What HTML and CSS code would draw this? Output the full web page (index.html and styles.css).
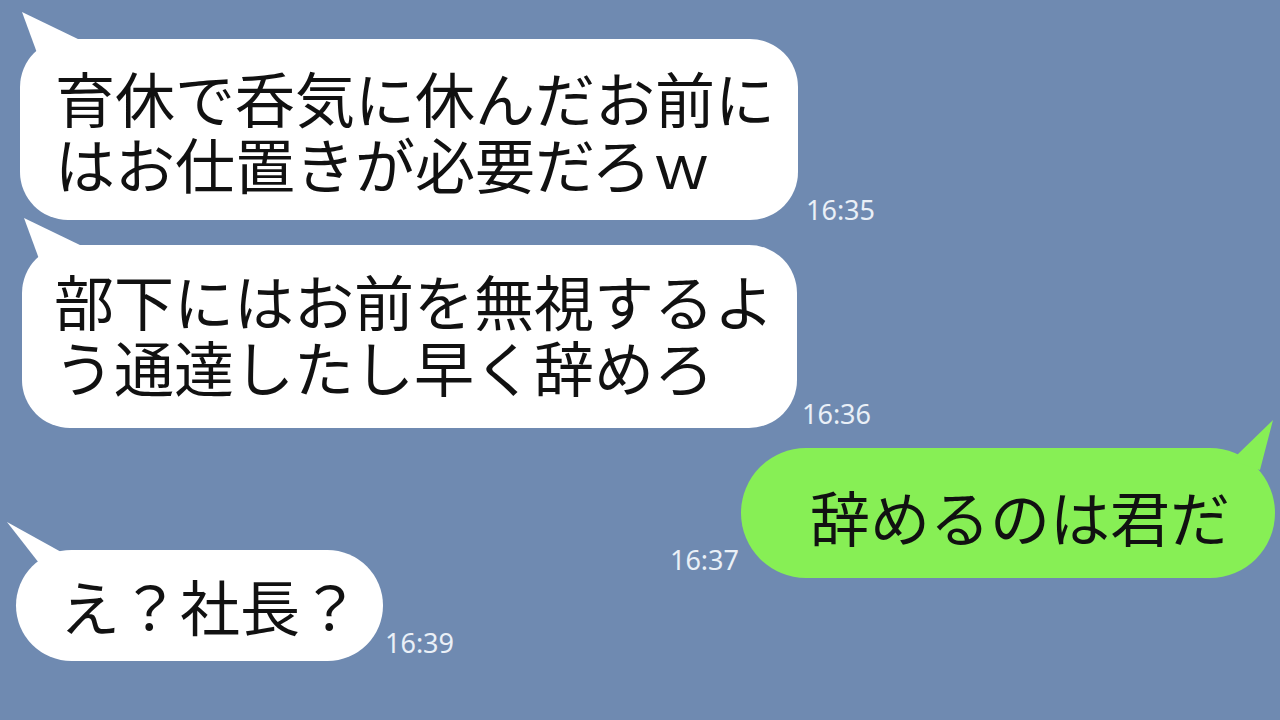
FILE: index.html
```html
<!DOCTYPE html>
<html lang="ja">
<head>
    <meta charset="UTF-8">
    <meta name="viewport" content="width=device-width, initial-scale=1.0">
    <title>トーク</title>
    <link rel="stylesheet" href="styles.css">
</head>
<body>
    <div class="chat">
        <!-- 相手のメッセージ -->
        <div class="row row-1">
            <div class="bubble in">
                <span class="line">育休で呑気に休んだお前に</span>
                <span class="line">はお仕置きが必要だろｗ</span>
            </div>
            <span class="time">16:35</span>
        </div>

        <div class="row row-2">
            <div class="bubble in">
                <span class="line">部下にはお前を無視するよ</span>
                <span class="line">う通達したし早く辞めろ</span>
            </div>
            <span class="time">16:36</span>
        </div>

        <!-- 自分のメッセージ -->
        <div class="row row-3">
            <span class="time">16:37</span>
            <div class="bubble out">辞めるのは君だ</div>
        </div>

        <div class="row row-4">
            <div class="bubble in short">え？社長？</div>
            <span class="time">16:39</span>
        </div>
    </div>
</body>
</html>
```

FILE: styles.css
```css
body {
    margin: 0;
    height: 720px;
    overflow: hidden;
    background-color: #6f8ab1;
    font-family: "Noto Sans CJK JP", "Noto Sans", sans-serif;
}

.chat {
    display: flex;
    flex-direction: column;
    padding: 39px 5px 0 0;
}

.row {
    display: flex;
    align-items: flex-end;
}

.row-1 {
    margin-left: 20px;
    gap: 8px;
}

.row-2 {
    margin-top: 25px;
    margin-left: 22px;
    gap: 5px;
}

.row-3 {
    margin-top: 20px;
    justify-content: flex-end;
    gap: 2px;
}

.row-4 {
    margin-top: -28px;
    margin-left: 16px;
    gap: 2px;
}

.bubble {
    position: relative;
    font-size: 60px;
    line-height: 66px;
    color: #111;
    white-space: nowrap;
}

.line {
    display: block;
    height: 66px;
}

.bubble.in {
    background-color: #fff;
    border-radius: 48px;
    padding: 25px 23px 24px 35px;
}

.row-2 .bubble.in {
    padding: 22px 23px 29px 32px;
}

.bubble.in.short {
    border-radius: 56px;
    padding: 22px 23px 23px 44px;
}

.bubble.out {
    background-color: #87ef55;
    border-radius: 65px;
    padding: 35px 45px 29px 69px;
}

/* 吹き出しのしっぽ */
.bubble.in::before {
    content: "";
    position: absolute;
    left: 0;
    top: -28px;
    width: 60px;
    height: 60px;
    background-color: #fff;
    clip-path: polygon(2px 1px, 60px 29px, 60px 50px, 20px 50px);
}

.bubble.in.short::before {
    left: -10px;
    top: -30px;
    clip-path: polygon(1px 2px, 57px 33px, 62px 52px, 40px 52px);
}

.bubble.out::after {
    content: "";
    position: absolute;
    right: 0;
    top: -30px;
    width: 45px;
    height: 60px;
    background-color: #87ef55;
    clip-path: polygon(43px 2px, 30px 52px, 0 42px, 7px 37px);
}

.time {
    font-family: "Noto Sans", sans-serif;
    font-size: 27px;
    line-height: 27px;
    color: #eaf0f7;
    margin-bottom: 1px;
}

.row-1 .time {
    margin-bottom: -3px;
}

.row-3 .time,
.row-4 .time {
    margin-bottom: 5px;
}
```
